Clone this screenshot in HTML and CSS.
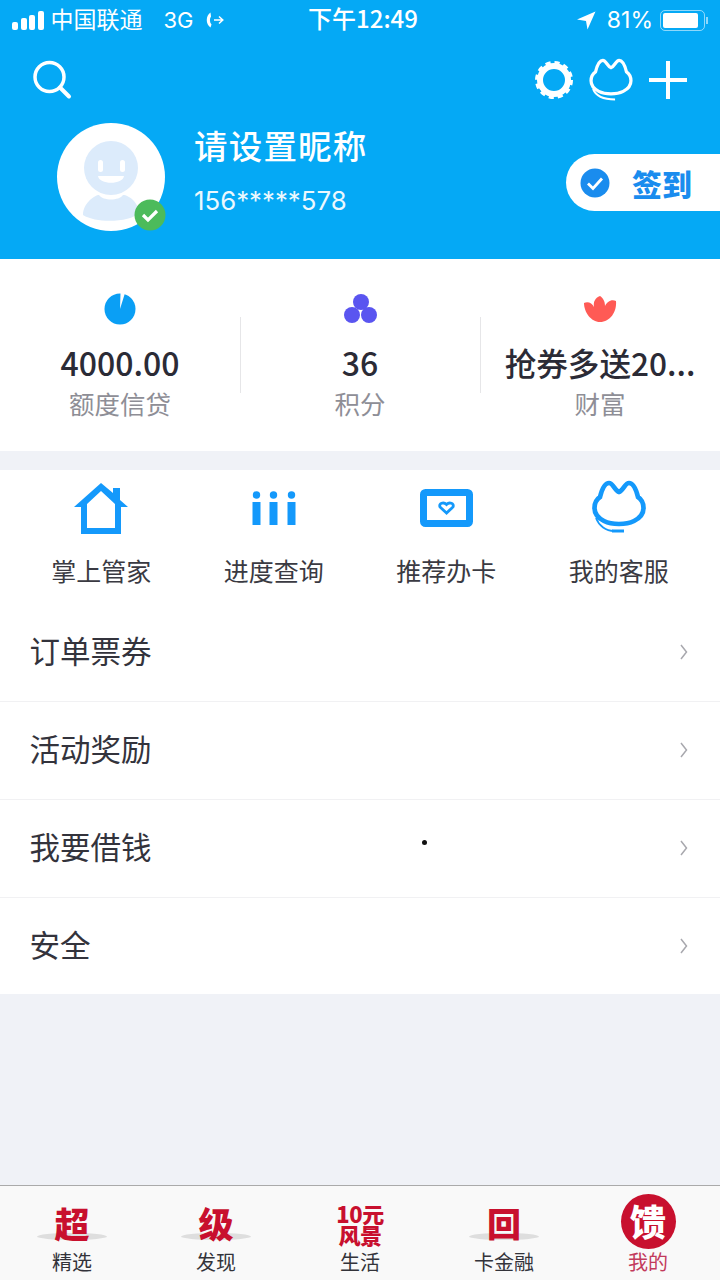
FILE: index.html
```html
<!DOCTYPE html>
<html lang="zh">
<head>
<meta charset="utf-8">
<title>我的</title>
<link rel="stylesheet" href="styles.css">
</head>
<body>
<div class="page">
  <header class="hero">
    <div class="status">
      <div class="status-left">
        <span class="signal"><i class="b1"></i><i class="b2"></i><i class="b3"></i><i class="b4"></i></span>
        <span class="carrier">中国联通</span>
        <span class="net">3G</span>
        <svg class="call" width="19" height="20" viewBox="0 0 19 20"><path d="M5.500 2.500C.5 5.500 .5 14.500 5.500 17.500L6.500 14.500C4.500 12.500 4.500 8.500 6 6.500Z" fill="#fff"/><path d="M9 10H17.500M14 6.500L17.800 10L14 13.500" fill="none" stroke="#fff" stroke-width="1.500"/></svg>
      </div>
      <div class="time">下午12:49</div>
      <div class="status-right">
        <svg class="loc" width="19" height="19" viewBox="0 0 19 19"><path d="M18.500 .5L0 8.500L9 10L10.500 18.500Z" fill="#fff"/></svg>
        <span class="pct">81%</span>
        <span class="battery"><span class="battery-fill"></span></span>
        <span class="nub"></span>
      </div>
    </div>
    <div class="actions">
      <svg class="search" width="40" height="40" viewBox="0 0 40 40"><circle cx="17.500" cy="17" r="14.500" fill="none" stroke="#fff" stroke-width="3.500"/><path d="M28 27.500L37 36.500" stroke="#fff" stroke-width="4" stroke-linecap="round"/></svg>
      <div class="action-right">
        <svg width="40" height="40" viewBox="0 0 40 40"><circle cx="20" cy="20" r="14" fill="none" stroke="#fff" stroke-width="6"/><circle cx="20" cy="20" r="17" fill="none" stroke="#fff" stroke-width="4" stroke-dasharray="5 3.900"/></svg>
        <svg width="44" height="44" viewBox="0 0 54 54"><path d="M27 12C23 11 21 3 17 3C13 3 10 9 8 17C5 19 2.500 23 2.500 28C2.500 33 6 38 12 41C20 45 34 45 42 41C48 38 51.500 33 51.500 28C51.500 23 49 19 46 17C44 9 41 3 37 3C33 3 31 11 27 12Z" fill="none" stroke="#fff" stroke-width="4"/><path d="M5 38C8 46 15 51 32 51" fill="none" stroke="#fff" stroke-width="2.500"/></svg>
        <svg width="40" height="40" viewBox="0 0 40 40"><path d="M20 1V39M1 20H39" stroke="#fff" stroke-width="4"/></svg>
      </div>
    </div>
    <div class="profile">
      <div class="avatar">
        <svg width="108" height="108" viewBox="0 0 108 108"><circle cx="54" cy="54" r="54" fill="#fff"/><circle cx="54" cy="45" r="27" fill="#dcebfb"/><rect x="41" y="37" width="5" height="12" rx="2.500" fill="#fff"/><rect x="63" y="37" width="5" height="12" rx="2.500" fill="#fff"/><path d="M41 53H67C66 62 42 62 41 53Z" fill="#fff"/><path d="M26 92C26 80 38 72 42 72C46 78 62 78 66 72C72 72 82 80 82 90C74 99 40 101 26 92Z" fill="#dcebfb"/></svg>
        <svg class="badge" width="32" height="32" viewBox="0 0 32 32"><circle cx="16" cy="16" r="15.500" fill="#4cbb5b"/><path d="M9 16L14 21L23 12" fill="none" stroke="#fff" stroke-width="3.200"/></svg>
      </div>
      <div class="who">
        <div class="name">请设置昵称</div>
        <div class="phone">156*****578</div>
      </div>
      <div class="sign">
        <svg width="30" height="30" viewBox="0 0 30 30"><circle cx="15" cy="15" r="14.500" fill="#1a8cee"/><path d="M8 15.500L13 20.500L22 10.500" fill="none" stroke="#fff" stroke-width="2.800"/></svg>
        <span class="sign-text">签到</span>
      </div>
    </div>
  </header>

  <section class="stats">
    <div class="stat">
      <svg class="stat-icon" width="32" height="32" viewBox="0 0 32 32"><circle cx="16" cy="16" r="15.500" fill="#0a9ff5"/><path d="M16 16L16.500 0H21Z" fill="#fff"/></svg>
      <div class="value">4000.00</div>
      <div class="label">额度信贷</div>
    </div>
    <div class="stat stat-line">
      <svg class="stat-icon" width="36" height="32" viewBox="0 0 36 32"><circle cx="19" cy="9" r="8" fill="#5a55f0"/><circle cx="10" cy="22" r="8" fill="#5a55f0"/><circle cx="27" cy="22" r="8" fill="#5a55f0"/></svg>
      <div class="value">36</div>
      <div class="label">积分</div>
    </div>
    <div class="stat stat-line">
      <svg class="stat-icon" width="34" height="32" viewBox="0 0 34 32"><path d="M1 10C5 8 9 10 11 14C10 9 12 5 17 3C20 5 22 8 22 13C24 9 28 6 33 8C34 19 27 29 17 29C8 29 1 19 1 10Z" fill="#ff5a55"/></svg>
      <div class="value value-long">抢券多送20...</div>
      <div class="label">财富</div>
    </div>
  </section>

  <section class="tools">
    <div class="tool">
      <svg width="54" height="54" viewBox="0 0 54 54"><path fill-rule="evenodd" d="M27 3L39 13V8H46V20L54 27H47V54H7V27H0ZM27 11L13 24V48H41V24Z" fill="#1499fb"/></svg>
      <div class="tool-label">掌上管家</div>
    </div>
    <div class="tool">
      <svg width="54" height="54" viewBox="0 0 54 54"><g fill="#1499fb"><circle cx="9.500" cy="15" r="3.700"/><circle cx="26.500" cy="15" r="3.700"/><circle cx="44.500" cy="15" r="3.700"/><rect x="5.500" y="22" width="8" height="23"/><rect x="22.500" y="22" width="8" height="23"/><rect x="40.500" y="22" width="8" height="23"/></g></svg>
      <div class="tool-label">进度查询</div>
    </div>
    <div class="tool">
      <svg width="54" height="54" viewBox="0 0 54 54"><rect x="4.500" y="12.500" width="46" height="31" rx="2" fill="none" stroke="#1499fb" stroke-width="7"/><path d="M27.500 33L21 27C19.500 23.500 24.500 21.500 27.500 24.500C30.500 21.500 35.500 23.500 34 27Z" fill="none" stroke="#1499fb" stroke-width="2.800"/></svg>
      <div class="tool-label">推荐办卡</div>
    </div>
    <div class="tool">
      <svg width="54" height="54" viewBox="0 0 54 54"><path d="M27 12C23 11 21 3 17 3C13 3 10 9 8 17C5 19 2.500 23 2.500 28C2.500 33 6 38 12 41C20 45 34 45 42 41C48 38 51.500 33 51.500 28C51.500 23 49 19 46 17C44 9 41 3 37 3C33 3 31 11 27 12Z" fill="none" stroke="#1499fb" stroke-width="4.700"/><path d="M4 38C7 46 14 51 22 51" fill="none" stroke="#1499fb" stroke-width="1.800"/><path d="M20 51H32" stroke="#1499fb" stroke-width="3"/></svg>
      <div class="tool-label">我的客服</div>
    </div>
  </section>

  <section class="menu">
    <div class="row"><span class="row-text">订单票券</span><svg width="8" height="16" viewBox="0 0 8 16"><path d="M1 1L6.500 8L1 15" fill="none" stroke="#a8a8ae" stroke-width="1.500"/></svg></div>
    <div class="row"><span class="row-text">活动奖励</span><svg width="8" height="16" viewBox="0 0 8 16"><path d="M1 1L6.500 8L1 15" fill="none" stroke="#a8a8ae" stroke-width="1.500"/></svg></div>
    <div class="row"><span class="row-text">我要借钱</span><svg width="8" height="16" viewBox="0 0 8 16"><path d="M1 1L6.500 8L1 15" fill="none" stroke="#a8a8ae" stroke-width="1.500"/></svg><i class="speck"></i></div>
    <div class="row row-last"><span class="row-text">安全</span><svg width="8" height="16" viewBox="0 0 8 16"><path d="M1 1L6.500 8L1 15" fill="none" stroke="#a8a8ae" stroke-width="1.500"/></svg></div>
  </section>

  <div class="spacer"></div>

  <nav class="tabs">
    <div class="tab"><div class="logo"><i class="shadow"></i><span class="mark">超</span></div><div class="tab-label">精选</div></div>
    <div class="tab"><div class="logo"><i class="shadow"></i><span class="mark">级</span></div><div class="tab-label">发现</div></div>
    <div class="tab"><div class="logo"><span class="mark-small">10元<br>风景</span></div><div class="tab-label">生活</div></div>
    <div class="tab"><div class="logo"><i class="shadow"></i><span class="mark mark-box">回</span></div><div class="tab-label">卡金融</div></div>
    <div class="tab"><div class="logo"><span class="mark-round">馈</span></div><div class="tab-label tab-active">我的</div></div>
  </nav>
</div>
</body>
</html>
```

FILE: styles.css
```css
* { box-sizing: border-box; }
html, body { margin: 0; padding: 0; }
body {
  font-family: "Noto Sans CJK SC", "Noto Sans", sans-serif;
  background: #f0f2f7;
  color: #2e2e38;
}
.page { width: 720px; height: 1280px; display: flex; flex-direction: column; overflow: hidden; }

.hero { background: #05a9f5; color: #fff; height: 259px; flex: none; }
.status { height: 40px; padding: 0 12px; display: flex; align-items: center; font-size: 23px; }
.status-left { flex: 1; display: flex; align-items: center; }
.status-right { flex: 1; display: flex; align-items: center; justify-content: flex-end; }
.signal { display: flex; align-items: flex-end; gap: 2.500px; height: 19px; margin-right: 7px; }
.signal i { width: 6px; background: #fff; border-radius: 2px; display: block; }
.b1 { height: 8px; } .b2 { height: 12px; } .b3 { height: 15px; } .b4 { height: 19px; }
.carrier { line-height: 36px; margin-bottom: 4px; }
.net { margin-left: 21px; font-family: Inter, sans-serif; font-size: 22px; }
.call { margin-left: 11px; }
.time { font-size: 24px; font-weight: 500; margin: 0 0 4px 6px; line-height: 36px; }
.loc { margin-right: 11px; }
.pct { font-family: Inter, sans-serif; font-size: 23px; margin-right: 7px; }
.battery { width: 45px; height: 21px; border: 1.500px solid rgba(255,255,255,.55); border-radius: 5px; padding: 2px; display: flex; }
.battery-fill { width: 35px; background: #fff; border-radius: 2px; }
.nub { width: 2px; height: 7px; background: rgba(255,255,255,.55); margin-left: 1px; }

.actions { display: flex; justify-content: space-between; align-items: center; height: 40px; margin-top: 20px; padding: 0 32px; }
.action-right { display: flex; align-items: center; gap: 15px; }
.search { display: block; }

.profile { display: flex; margin-top: 23px; padding-left: 57px; }
.avatar { position: relative; width: 108px; height: 108px; flex: none; }
.avatar svg { display: block; }
.badge { position: absolute; left: 77px; top: 76px; }
.who { margin: 2px 0 0 29px; }
.name { font-size: 33.500px; font-weight: 500; line-height: 40px; letter-spacing: 1.200px; }
.phone { font-family: Inter, sans-serif; font-size: 25.800px; line-height: 34px; margin-top: 19px; opacity: .92; }
.sign { margin-left: auto; margin-top: 31px; width: 154px; height: 57px; background: #fff; border-radius: 29px 0 0 29px; display: flex; align-items: center; padding-left: 14px; }
.sign-text { margin-left: 22px; font-size: 30px; font-weight: 900; color: #1a8cee; }

.stats { background: #fff; height: 192px; flex: none; display: grid; grid-template-columns: repeat(3, 240px); padding-top: 34px; }
.stat { position: relative; display: flex; flex-direction: column; align-items: center; min-width: 0; }
.stat-line::before { content: ""; position: absolute; left: 0; top: 24px; height: 76px; width: 1px; background: #e6e6e8; }
.stat-icon { display: block; height: 32px; flex: none; }
.value { font-size: 32px; font-weight: 500; line-height: 40px; margin-top: 17px; color: #2b2b36; white-space: nowrap; }
.value-long { font-size: 31.600px; }
.label { font-size: 25.500px; line-height: 36px; margin-top: 3px; color: #8e8e96; }

.tools { background: #fff; margin-top: 19px; height: 134px; flex: none; display: grid; grid-template-columns: repeat(4, 172.500px); padding: 10px 0 0 15px; }
.tool { display: flex; flex-direction: column; align-items: center; }
.tool svg { display: block; }
.tool-label { font-size: 25px; line-height: 36px; margin-top: 18px; color: #3a3a42; white-space: nowrap; }

.menu { background: #fff; flex: none; }
.row { position: relative; height: 98px; padding: 0 32px 0 29.500px; border-bottom: 1px solid #f1f1f3; display: flex; align-items: center; justify-content: space-between; font-size: 30.500px; color: #33333c; padding-bottom: 2px; }
.row-text { margin-bottom: 4px; }
.row-last { height: 96px; border-bottom: 0; padding-bottom: 0; }
.speck { position: absolute; left: 422px; top: 40px; width: 5px; height: 5px; border-radius: 50%; background: #111; }

.spacer { flex: 1; }

.tabs { height: 95px; flex: none; background: #f9f9f9; border-top: 1px solid #aaa; display: grid; grid-template-columns: repeat(5, 144px); }
.tab { display: flex; flex-direction: column; align-items: center; }
.logo { position: relative; height: 62px; width: 100%; display: flex; justify-content: center; align-items: flex-start; }
.shadow { position: absolute; left: 50%; top: 47px; width: 70px; height: 7px; margin-left: -35px; border-radius: 50%; background: #dedede; }
.mark { position: relative; font-size: 35px; font-weight: 900; line-height: 40px; margin-top: 17px; color: #c8102e; }
.mark-box { font-size: 34px; }
.mark-small { font-size: 22px; font-weight: 900; line-height: 21px; margin-top: 17px; color: #c8102e; text-align: center; letter-spacing: -.5px; }
.mark-round { width: 55px; height: 55px; margin-top: 8px; border-radius: 50%; background: #c8102e; color: #fff; font-size: 36px; font-weight: 900; line-height: 52px; text-align: center; }
.tab-label { font-size: 20px; line-height: 24px; margin-top: 2px; color: #33333a; white-space: nowrap; }
.tab-active { color: #c23a5c; }
```
